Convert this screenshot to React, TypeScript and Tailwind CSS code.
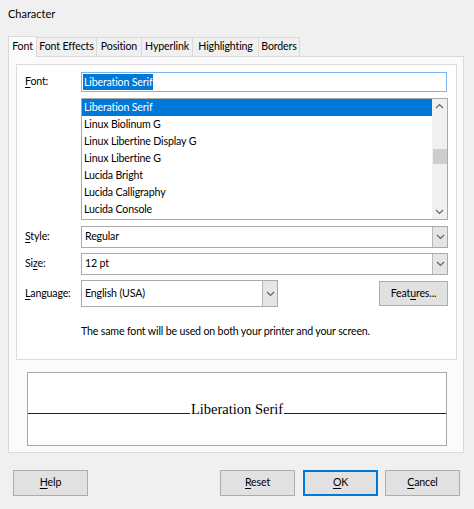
import React from "react";

const Down = () => (
  <svg width="9" height="6" viewBox="0 0 9 6">
    <polyline points="1,1 4.5,4.5 8,1" fill="none" stroke="#606060" strokeWidth="1.1" />
  </svg>
);
const Up = () => (
  <svg width="9" height="6" viewBox="0 0 9 6">
    <polyline points="1,5 4.5,1.5 8,5" fill="none" stroke="#606060" strokeWidth="1.1" />
  </svg>
);

function Combo({ value, w, h }: { value: string; w: string; h: string }) {
  return (
    <div className={`flex ${w} ${h} border border-[#a9a9a9] bg-white`}>
      <div className="flex-1 pl-[3px] flex items-center">{value}</div>
      <div className="w-[15px] bg-[#e5e5e5] border-l border-[#b9b9b9] flex items-center justify-center">
        <Down />
      </div>
    </div>
  );
}

const tabs: [string, string][] = [
  ["Font Effects", "w-[60px]"],
  ["Position", "w-[45px]"],
  ["Hyperlink", "w-[51px]"],
  ["Highlighting", "w-[66px]"],
  ["Borders", "w-[41px]"],
];

const fonts = [
  "Liberation Serif",
  "Linux Biolinum G",
  "Linux Libertine Display G",
  "Linux Libertine G",
  "Lucida Bright",
  "Lucida Calligraphy",
  "Lucida Console",
];

function Btn({ pre, u, post, cls }: { pre: string; u: string; post: string; cls?: string }) {
  return (
    <div
      className={`w-[75px] h-[26px] flex items-center justify-center bg-[#e1e1e1] ${
        cls ?? "border border-[#adadad]"
      }`}
    >
      <span>
        {pre}
        <span className="underline underline-offset-2">{u}</span>
        {post}
      </span>
    </div>
  );
}

export default function App() {
  return (
    <div className="w-[474px] h-[509px] bg-[#f0f0f0] text-[10.6px] tracking-[-0.15px] text-black font-['Lato',sans-serif] flex flex-col overflow-hidden">
      <div className="h-[28px] pl-[8px] flex items-center text-[11px] tracking-normal">Character</div>
      <div className="h-[28px] flex items-end pl-[8px] whitespace-nowrap">
        <div className="w-[29px] h-[21px] -mb-px bg-[#fbfbfb] border border-b-0 border-[#d9d9d9] flex items-center justify-center relative z-10">
          Font
        </div>
        {tabs.map(([t, w]) => (
          <div
            key={t}
            className={`${w} h-[19px] bg-[#f0f0f0] border border-l-0 border-b-0 border-[#d9d9d9] flex items-center justify-center`}
          >
            {t}
          </div>
        ))}
      </div>
      <div className="mx-[8px] w-[456px] h-[397px] border border-[#d9d9d9] bg-[#fbfbfb] flex flex-col pl-[7px] pt-[7px]">
        <div className="w-[441px] h-[296px] border border-[#dcdcdc] bg-white pt-[7px] flex flex-col">
          <div className="flex h-[20px]">
            <div className="w-[64px] pl-[8px] flex items-center">
              <span>
                <span className="underline underline-offset-2">F</span>ont:
              </span>
            </div>
            <div className="w-[366px] border border-[#7eb4ea] flex items-center pl-[1px]">
              <span className="bg-[#0078d7] text-white px-[1px] leading-[16px]">Liberation Serif</span>
            </div>
          </div>
          <div className="flex mt-[6px]">
            <div className="w-[64px]" />
            <div className="w-[367px] h-[122px] border border-[#a9a9a9] flex">
              <div className="flex-1 flex flex-col">
                {fonts.map((f, i) => (
                  <div
                    key={f}
                    className={`h-[17.2px] pl-[2px] flex items-center ${i === 0 ? "bg-[#0078d7] text-white" : ""}`}
                  >
                    {f}
                  </div>
                ))}
              </div>
              <div className="w-[15px] bg-[#f0f0f0] flex flex-col items-center">
                <div className="h-[14px] flex items-center">
                  <Up />
                </div>
                <div className="h-[36px]" />
                <div className="w-[14px] h-[15px] bg-[#cdcdcd]" />
                <div className="flex-1" />
                <div className="h-[14px] flex items-center">
                  <Down />
                </div>
              </div>
            </div>
          </div>
          <div className="flex mt-[6px] items-center">
            <div className="w-[64px] pl-[8px]">
              <span className="underline underline-offset-2">S</span>tyle:
            </div>
            <Combo value="Regular" w="w-[367px]" h="h-[22px]" />
          </div>
          <div className="flex mt-[5px] items-center">
            <div className="w-[64px] pl-[8px]">
              Si<span className="underline underline-offset-2">z</span>e:
            </div>
            <Combo value="12 pt" w="w-[367px]" h="h-[22px]" />
          </div>
          <div className="flex mt-[5px] items-center">
            <div className="w-[64px] pl-[8px]">
              <span className="underline underline-offset-2">L</span>anguage:
            </div>
            <Combo value="English (USA)" w="w-[197px]" h="h-[27px]" />
            <div className="ml-[101px] w-[69px] h-[25px] bg-[#e1e1e1] border border-[#adadad] flex items-center justify-center">
              <span>
                Feat<span className="underline underline-offset-2">u</span>res...
              </span>
            </div>
          </div>
          <div className="pl-[64px] mt-[17px]">The same font will be used on both your printer and your screen.</div>
        </div>
        <div className="ml-[11px] mt-[12px] w-[420px] h-[74px] border border-[#a9a9a9] bg-white pt-[28px]">
          <div className="flex items-baseline tracking-normal">
            <div className="flex-1 h-[1px] bg-[#222]" />
            <span className="font-['Liberation_Serif',serif] text-[14.5px] leading-[16px] px-[1px]">Liberation Serif</span>
            <div className="flex-1 h-[1px] bg-[#222]" />
          </div>
        </div>
      </div>
      <div className="flex mt-[17px] pl-[13px]">
        <Btn pre="" u="H" post="elp" />
        <div className="ml-[132px]">
          <Btn pre="" u="R" post="eset" />
        </div>
        <div className="ml-[8px]">
          <Btn pre="" u="O" post="K" cls="border-2 border-[#0078d7]" />
        </div>
        <div className="ml-[7px]">
          <Btn pre="" u="C" post="ancel" />
        </div>
      </div>
    </div>
  );
}
